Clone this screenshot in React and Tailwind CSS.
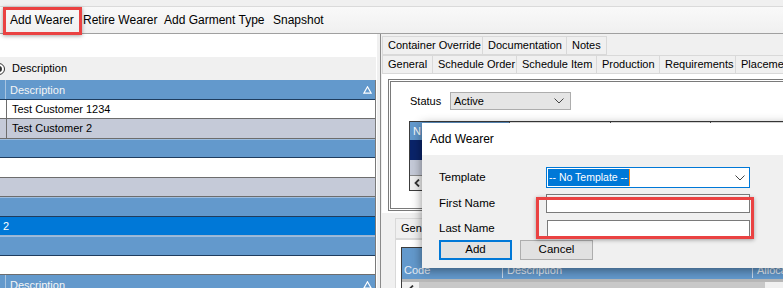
import React from 'react';

const leftRows = [
  { kind: 'white', h: 'h-[19px]', text: 'Test Customer 1234', cell: true },
  { kind: 'grey', h: 'h-[20px]', text: 'Test Customer 2', cell: true },
  { kind: 'blue', h: 'h-[19px]' },
  { kind: 'white', h: 'h-[20px]' },
  { kind: 'grey', h: 'h-[19px]' },
  { kind: 'blue', h: 'h-[20px]' },
  { kind: 'sel', h: 'h-[19px]', text: '2' },
  { kind: 'blue', h: 'h-[20px]' },
  { kind: 'white', h: 'h-[19px]' },
];

const rowStyle = {
  white: 'bg-white border-b border-[#6d6d6d] text-black',
  grey: 'bg-[#c5cad8] border-b border-[#6d6d6d] text-black',
  blue: 'bg-[#6399cc] border-t border-[#9cbde0] border-b border-b-[#1f3d5f]',
  sel: 'bg-[#0078d7] border-b border-[#9db4cf] text-white',
};

const Triangle = () => (
  <svg width="9" height="8" viewBox="0 0 9 8" className="mr-[3px]">
    <polygon points="4.5,0.8 8.2,7.2 0.8,7.2" fill="none" stroke="#fff" strokeWidth="1.2" />
  </svg>
);

const Chevron = () => (
  <svg width="10" height="6" viewBox="0 0 10 6">
    <polyline points="0.5,0.5 5,5 9.5,0.5" fill="none" stroke="#444" strokeWidth="1" />
  </svg>
);

const LeftArrow = () => (
  <svg width="6" height="8" viewBox="0 0 6 8">
    <polyline points="5,0.5 1.5,4 5,7.5" fill="none" stroke="#333" strokeWidth="1.8" />
  </svg>
);

const HeaderRow = () => (
  <div className="h-[20px] shrink-0 flex bg-[#6399cc] border-b border-[#1f3d5f] text-[#f5f5f5]">
    <div className="w-[6px] border-r border-[#a8c4e0]" />
    <div className="flex-1 flex items-center justify-between pl-[4px] pt-[1px]">
      <span>Description</span>
      <Triangle />
    </div>
  </div>
);

const LeftPanel = () => (
  <div className="w-[376px] shrink-0 flex flex-col text-[11px]">
    <div className="h-[23px] shrink-0 bg-white" />
    <div className="h-[23px] shrink-0 bg-[#f0f0f0] flex items-center">
      <div className="ml-[-7px] w-[12px] h-[12px] rounded-full border border-[#333] bg-white flex items-center justify-center">
        <div className="w-[6px] h-[6px] rounded-full bg-[#333]" />
      </div>
      <span className="ml-[7px] text-black">Description</span>
    </div>
    <div className="flex flex-col border-r border-[#7a7a7a]">
      <HeaderRow />
      {leftRows.map((r, i) => (
        <div key={i} className={`${r.h} shrink-0 flex items-center ${rowStyle[r.kind]}`}>
          {r.cell ? (
            <>
              <div className="w-[7px] h-full border-r border-[#6d6d6d]" />
              <span className="pl-[5px]">{r.text}</span>
            </>
          ) : (
            <span className="pl-[3px]">{r.text}</span>
          )}
        </div>
      ))}
      <HeaderRow />
    </div>
  </div>
);

const Tab = ({ w, children }) => (
  <div className={`${w} shrink-0 h-full flex items-center pl-[5px] border border-[#d9d9d9] -ml-px first:ml-0 bg-[#f0f0f0] text-black whitespace-nowrap overflow-hidden`}>
    {children}
  </div>
);

const RightPanel = () => (
  <div className="flex-1 flex flex-col bg-[#f0f0f0] border-l border-[#8a8a8a] pt-[2px] pl-[1px] text-[11px] min-w-0">
    <div className="h-[19px] shrink-0 flex">
      <Tab w="w-[101px]">Container Override</Tab>
      <Tab w="w-[85px]">Documentation</Tab>
      <Tab w="w-[41px]">Notes</Tab>
    </div>
    <div className="h-[19px] shrink-0 flex">
      <Tab w="w-[51px]">General</Tab>
      <Tab w="w-[85px]">Schedule Order</Tab>
      <Tab w="w-[81px]">Schedule Item</Tab>
      <Tab w="w-[64px]">Production</Tab>
      <Tab w="w-[77px]">Requirements</Tab>
      <Tab w="w-[60px]">Placements</Tab>
    </div>
    <div className="h-[139px] shrink-0 bg-white pl-[6px] pt-[5px] border-b border-[#ffffff]">
      <div className="h-[132px] border-[3px] border-double border-r-0 border-[#7a7a7a] pt-[10px] pl-[19px] flex flex-col">
        <div className="flex items-center h-[18px]">
          <span className="w-[40px]">Status</span>
          <div className="w-[121px] h-[18px] bg-[#e5e5e5] border border-[#adadad] flex items-center justify-between pl-[3px] pr-[6px]">
            <span>Active</span>
            <Chevron />
          </div>
        </div>
        <div className="mt-[11px] -ml-px flex flex-col border border-r-0 border-[#3c3c3c]">
          <div className="h-[18px] flex">
            <div className="w-[99px] bg-[#6399cc] text-white pl-[3px] flex items-center">N</div>
            <div className="w-[101px] border-l border-[#555] bg-[#f7f7f7]" />
            <div className="w-[100px] border-l border-[#555] bg-[#f7f7f7]" />
            <div className="flex-1 border-l border-[#555] bg-[#f7f7f7]" />
          </div>
          <div className="h-[20px] bg-[#0a246a]" />
          <div className="h-[15px] bg-[#c5cad8]" />
          <div className="h-[15px] flex border-t border-[#888]">
            <div className="w-[14px] flex items-center justify-center bg-[#f0f0f0]">
              <LeftArrow />
            </div>
            <div className="flex-1 bg-[#c8c8c8]" />
          </div>
        </div>
      </div>
    </div>
    <div className="mt-[5px] ml-[13px] flex flex-col">
      <div className="h-[21px] flex">
        <Tab w="w-[60px]">General</Tab>
      </div>
      <div className="bg-white border border-[#d9d9d9] border-r-0 pl-[5px] pt-[7px] h-[60px]">
        <div className="border border-r-0 border-[#3c3c3c] flex flex-col">
          <div className="h-[31px] bg-[#6399cc] flex items-end text-[#e8eef6] pb-[1px]">
            <span className="w-[100px] shrink-0 pl-[2px]">Code</span>
            <span className="w-[250px] shrink-0 pl-[4px] border-l border-[#c9daee]">Description</span>
            <span className="flex-1 min-w-0 pl-[4px] border-l border-[#c9daee] whitespace-nowrap overflow-hidden">Allocated</span>
          </div>
          <div className="h-[3px] bg-[#b8b8b8]" />
          <div className="h-[14px] flex">
            <div className="w-[17px] shrink-0 bg-[#f0f0f0] flex items-center justify-center">
              <LeftArrow />
            </div>
            <div className="w-[346px] shrink-0 bg-[#c8c8c8]" />
            <div className="flex-1 bg-[#f0f0f0]" />
          </div>
        </div>
      </div>
    </div>
  </div>
);

const Dialog = () => (
  <div className="absolute left-[422px] top-[123px] w-[400px] h-[145px] flex flex-col shadow-[0_2px_10px_rgba(0,0,0,0.45)] text-black">
    <div className="h-[32px] bg-white flex items-center pl-[8px] text-[12px]">Add Wearer</div>
    <div className="flex-1 bg-[#f0f0f0] pl-[17px] pt-[12px] text-[11.5px] flex flex-col">
      <div className="flex items-center h-[21px]">
        <span className="w-[107px]">Template</span>
        <div className="w-[204px] h-[21px] bg-white border border-[#0078d7] flex items-center pl-[1px] pr-[4px]">
          <span className="bg-[#0078d7] text-white h-[17px] flex items-center px-[1px] text-[10.5px]">-- No Template --</span>
          <span className="w-px h-[17px] bg-[#ff8c1a]" />
          <span className="flex-1" />
          <Chevron />
        </div>
      </div>
      <div className="flex items-center h-[19px] mt-[6px]">
        <span className="w-[107px]">First Name</span>
        <div className="w-[204px] h-[19px] bg-white border border-[#7a7a7a]" />
      </div>
      <div className="flex items-center h-[18px] mt-[7px]">
        <span className="w-[108px]">Last Name</span>
        <div className="w-[203px] h-[18px] bg-white border border-[#7a7a7a]" />
      </div>
      <div className="flex gap-[8px] mt-[2px]">
        <div className="w-[73px] h-[20px] bg-[#e1e1e1] border-2 border-[#0078d7] flex items-center justify-center">Add</div>
        <div className="w-[73px] h-[20px] bg-[#e1e1e1] border border-[#adadad] flex items-center justify-center">Cancel</div>
      </div>
    </div>
  </div>
);

export default function App() {
  return (
    <div className="w-[783px] h-[288px] relative overflow-hidden bg-[#f0f0f0] flex flex-col font-['Liberation_Sans',Arial,sans-serif]">
      <div className="h-[7px] shrink-0 bg-[#f0f0f0] border-b border-[#dadada]" />
      <div className="h-[27px] shrink-0 bg-gradient-to-b from-[#f9f9f9] to-[#f0f0f0] border-b border-[#a0a0a0] flex items-center pl-[10px] text-[12px] text-black">
        <span className="w-[73px]">Add Wearer</span>
        <span className="w-[81px]">Retire Wearer</span>
        <span className="w-[109px]">Add Garment Type</span>
        <span>Snapshot</span>
      </div>
      <div className="flex-1 flex min-h-0">
        <LeftPanel />
        <div className="w-[4px] shrink-0 bg-[#f0f0f0] border-l border-[#ffffff]" />
        <RightPanel />
      </div>
      <Dialog />
      <div className="absolute left-[3px] top-[7px] w-[79px] h-[28px] border-[3px] border-[#ea4242] shadow-[0_1px_4px_rgba(0,0,0,0.35)]" />
      <div className="absolute left-[536px] top-[197px] w-[218px] h-[42px] border-[3px] border-[#ea4242] shadow-[0_1px_4px_rgba(0,0,0,0.35)]" />
    </div>
  );
}
